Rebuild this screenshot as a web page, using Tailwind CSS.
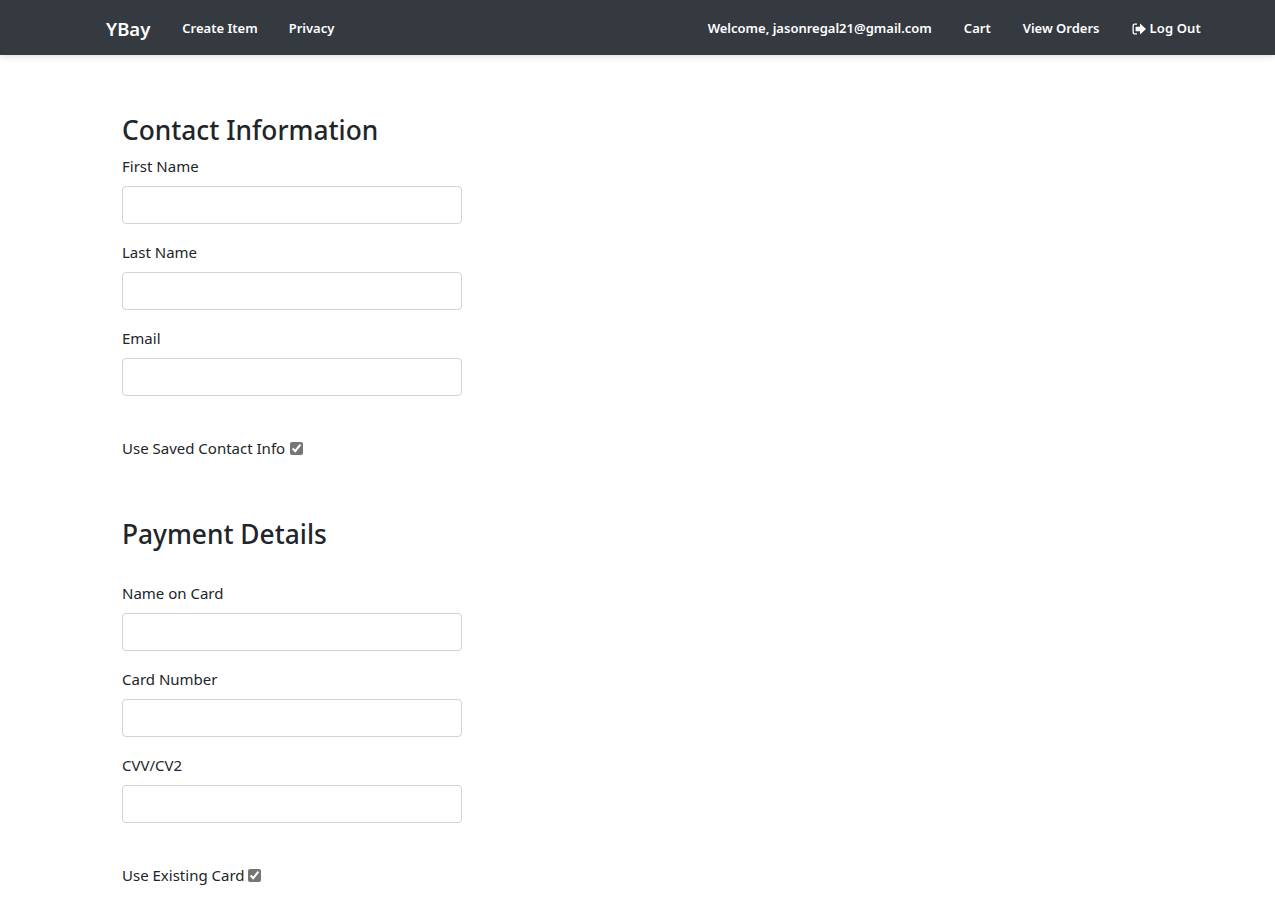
<!DOCTYPE html>
<html lang="en">

<head>
    <meta charset="UTF-8">
    <meta name="viewport" content="width=device-width, initial-scale=1.0">
    <script src="https://cdn.jsdelivr.net/npm/@tailwindcss/browser@4"></script>
    <title>YBay</title>
</head>

<body class="bg-white text-[#212529] font-['Noto_Sans',sans-serif]">
    <nav class="h-[55px] pt-[2px] bg-[#343a40] shadow-[0_2px_6px_rgba(0,0,0,0.12)] pl-[106px] pr-[74px] flex items-center justify-between text-white text-[13px] font-semibold">
        <div class="flex items-center">
            <a href="#" class="text-[18.5px] font-semibold mr-[32px]">YBay</a>
            <a href="#" class="mr-[31px]">Create Item</a>
            <a href="#">Privacy</a>
        </div>
        <div class="flex items-center gap-[32px]">
            <span>Welcome, jasonregal21@gmail.com</span>
            <a href="#">Cart</a>
            <a href="#">View Orders</a>
            <a href="#" class="flex items-center gap-[4px] tracking-[0.15px]">
                <svg class="w-[14px] h-[12px]" viewBox="0 0 14 12" fill="white">
                    <path d="M5 .5H2.5A2 2 0 0 0 .5 2.5v7a2 2 0 0 0 2 2H5v-1.3H2.8a1 1 0 0 1-1-1V2.8a1 1 0 0 1 1-1H5z"/>
                    <path d="M8 .5L14 6l-6 5.5V8.3H3.6V3.7H8z"/>
                </svg>
                Log Out
            </a>
        </div>
    </nav>

    <main class="pl-[122px] pt-[58px] w-[462px]">
        <form>
            <h3 class="text-[26.3px] leading-[34px] font-medium mb-[7px]">Contact Information</h3>
            <div class="mb-4">
                <label for="first" class="block text-[15px] leading-6 mb-2">First Name</label>
                <input id="first" type="text" class="block w-full h-[38px] border border-[#ced4da] rounded bg-white">
            </div>
            <div class="mb-4">
                <label for="last" class="block text-[15px] leading-6 mb-2">Last Name</label>
                <input id="last" type="text" class="block w-full h-[38px] border border-[#ced4da] rounded bg-white">
            </div>
            <div class="mb-4">
                <label for="email" class="block text-[15px] leading-6 mb-2">Email</label>
                <input id="email" type="text" class="block w-full h-[38px] border border-[#ced4da] rounded bg-white">
            </div>
            <div class="mt-[40px] flex items-center gap-[5px] text-[15px] leading-6">
                <label for="saved">Use Saved Contact Info</label>
                <input id="saved" type="checkbox" checked class="w-[13px] h-[13px] accent-[#767676]">
            </div>

            <h3 class="text-[26.3px] leading-[34px] font-medium mt-[57px] mb-[30px]">Payment Details</h3>
            <div class="mb-4">
                <label for="card" class="block text-[15px] leading-6 mb-2">Name on Card</label>
                <input id="card" type="text" class="block w-full h-[38px] border border-[#ced4da] rounded bg-white">
            </div>
            <div class="mb-4">
                <label for="number" class="block text-[15px] leading-6 mb-2">Card Number</label>
                <input id="number" type="text" class="block w-full h-[38px] border border-[#ced4da] rounded bg-white">
            </div>
            <div class="mb-4">
                <label for="cvv" class="block text-[15px] leading-6 mb-2">CVV/CV2</label>
                <input id="cvv" type="text" class="block w-full h-[38px] border border-[#ced4da] rounded bg-white">
            </div>
            <div class="mt-[40px] flex items-center gap-[3px] text-[15px] leading-6">
                <label for="existing">Use Existing Card</label>
                <input id="existing" type="checkbox" checked class="w-[13px] h-[13px] accent-[#767676]">
            </div>
        </form>
    </main>
</body>

</html>
